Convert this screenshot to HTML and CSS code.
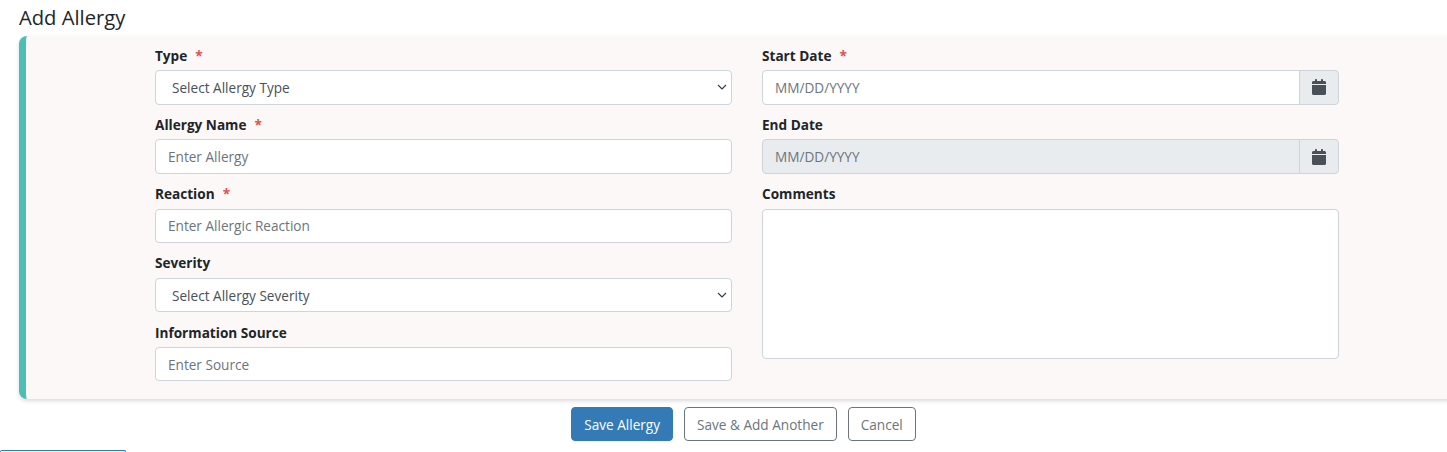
FILE: index.html
```html
<!DOCTYPE html>
<html>
<head>
    <title>Add Allergy</title>
    <meta charset="UTF-8">
    <link rel="stylesheet" href="styles.css">
</head>

<body>
    <div class="page">
        <h1 class="title">Add Allergy</h1>
        <form class="panel">
            <div class="form-grid">
                <div class="col">
                    <div class="group">
                        <label>Type <span class="req">*</span></label>
                        <select class="control select"><option>Select Allergy Type</option></select>
                    </div>
                    <div class="group">
                        <label>Allergy Name <span class="req">*</span></label>
                        <input class="control" type="text" placeholder="Enter Allergy">
                    </div>
                    <div class="group">
                        <label>Reaction <span class="req">*</span></label>
                        <input class="control" type="text" placeholder="Enter Allergic Reaction">
                    </div>
                    <div class="group">
                        <label>Severity</label>
                        <select class="control select"><option>Select Allergy Severity</option></select>
                    </div>
                    <div class="group">
                        <label>Information Source</label>
                        <input class="control" type="text" placeholder="Enter Source">
                    </div>
                </div>
                <div class="col">
                    <div class="group">
                        <label>Start Date <span class="req">*</span></label>
                        <div class="date">
                            <input class="control" type="text" placeholder="MM/DD/YYYY">
                            <span class="addon">
                                <svg class="cal" viewBox="0 0 448 512"><path d="M96 32V64H48C21.5 64 0 85.5 0 112v48H448V112c0-26.5-21.5-48-48-48H352V32c0-17.7-14.3-32-32-32s-32 14.3-32 32V64H160V32c0-17.7-14.3-32-32-32S96 14.3 96 32zM448 192H0V464c0 26.5 21.5 48 48 48H400c26.5 0 48-21.5 48-48V192z"/></svg>
                            </span>
                        </div>
                    </div>
                    <div class="group">
                        <label>End Date</label>
                        <div class="date">
                            <input class="control" type="text" placeholder="MM/DD/YYYY" disabled>
                            <span class="addon">
                                <svg class="cal" viewBox="0 0 448 512"><path d="M96 32V64H48C21.5 64 0 85.5 0 112v48H448V112c0-26.5-21.5-48-48-48H352V32c0-17.7-14.3-32-32-32s-32 14.3-32 32V64H160V32c0-17.7-14.3-32-32-32S96 14.3 96 32zM448 192H0V464c0 26.5 21.5 48 48 48H400c26.5 0 48-21.5 48-48V192z"/></svg>
                            </span>
                        </div>
                    </div>
                    <div class="group">
                        <label>Comments</label>
                        <textarea class="control comments"></textarea>
                    </div>
                </div>
            </div>
        </form>
        <div class="actions">
            <button type="button" class="btn primary">Save Allergy</button>
            <button type="button" class="btn outline">Save &amp; Add Another</button>
            <button type="button" class="btn outline">Cancel</button>
        </div>
        <button type="button" class="next-btn"></button>
    </div>
</body>
</html>
```

FILE: styles.css
```css
html, body {
    margin: 0;
    height: 452px;
    overflow: hidden;
    background-color: white;
}

body {
    font-family: "Open Sans", sans-serif;
    font-size: 13.6px;
    line-height: 20.4px;
    color: #212529;
}

.page {
    width: 1449px;
    margin-left: 19px;
}

.title {
    margin: 0;
    padding-top: 3px;
    height: 36px;
    box-sizing: border-box;
    font-size: 20.2px;
    line-height: 28px;
    font-weight: 400;
}

.panel {
    display: flex;
    justify-content: center;
    height: 363px;
    box-sizing: border-box;
    padding-top: 9.8px;
    background-color: #fbf8f7;
    border-left: 7px solid #4dbdb7;
    border-radius: 8px;
    box-shadow: 0 2px 4px rgba(0, 0, 0, 0.15);
}

.form-grid {
    display: flex;
    gap: 30px;
}

.col {
    width: 577px;
}

.group {
    margin-bottom: 10.4px;
}

label {
    display: block;
    margin-bottom: 4px;
    font-weight: 700;
}

.req {
    margin-left: 4.5px;
    color: #e0504f;
}

.control {
    display: block;
    width: 100%;
    height: 34.4px;
    box-sizing: border-box;
    padding: 6px 12px;
    font-family: "Open Sans", sans-serif;
    font-size: 13.6px;
    line-height: 20.4px;
    color: #495057;
    background-color: white;
    border: 1px solid #ced4da;
    border-radius: 4px;
    outline: none;
}

.control::placeholder {
    color: #6c757d;
    opacity: 1;
}

.control:disabled {
    background-color: #e9ecef;
}

.select {
    appearance: none;
    padding: 7px 12px 6px 16px;
    background: white url("data:image/svg+xml,%3Csvg xmlns='http://www.w3.org/2000/svg' viewBox='0 0 10 6'%3E%3Cpath d='M1 1l4 4 4-4' fill='none' stroke='%23343a40' stroke-width='1.1'/%3E%3C/svg%3E") no-repeat right 4px center / 10px 6px;
}

.comments {
    height: 150px;
    resize: none;
}

.date {
    display: flex;
}

.date .control {
    flex: 1;
    min-width: 0;
    border-radius: 4px 0 0 4px;
}

.addon {
    display: flex;
    align-items: center;
    justify-content: center;
    width: 40px;
    box-sizing: border-box;
    margin-left: -1px;
    background-color: #e9ecef;
    border: 1px solid #ced4da;
    border-radius: 0 4px 4px 0;
}

.cal {
    width: 14px;
    height: 16px;
    fill: #495057;
}

.actions {
    display: flex;
    justify-content: center;
    gap: 11px;
    margin-top: 8px;
}

.btn {
    height: 34px;
    box-sizing: border-box;
    padding: 0 12px;
    font-family: "Open Sans", sans-serif;
    font-size: 13.6px;
    border: 1px solid #6c757d;
    border-radius: 4px;
    background-color: white;
    color: #6c757d;
}

.btn.primary {
    background-color: #337ab7;
    border-color: #337ab7;
    color: white;
}

.next-btn {
    display: block;
    width: 126px;
    height: 2px;
    padding: 0;
    margin: 9px 0 0 -19px;
    background-color: white;
    border: 1px solid #337ab7;
    border-bottom: none;
    border-radius: 4px 4px 0 0;
}
```
